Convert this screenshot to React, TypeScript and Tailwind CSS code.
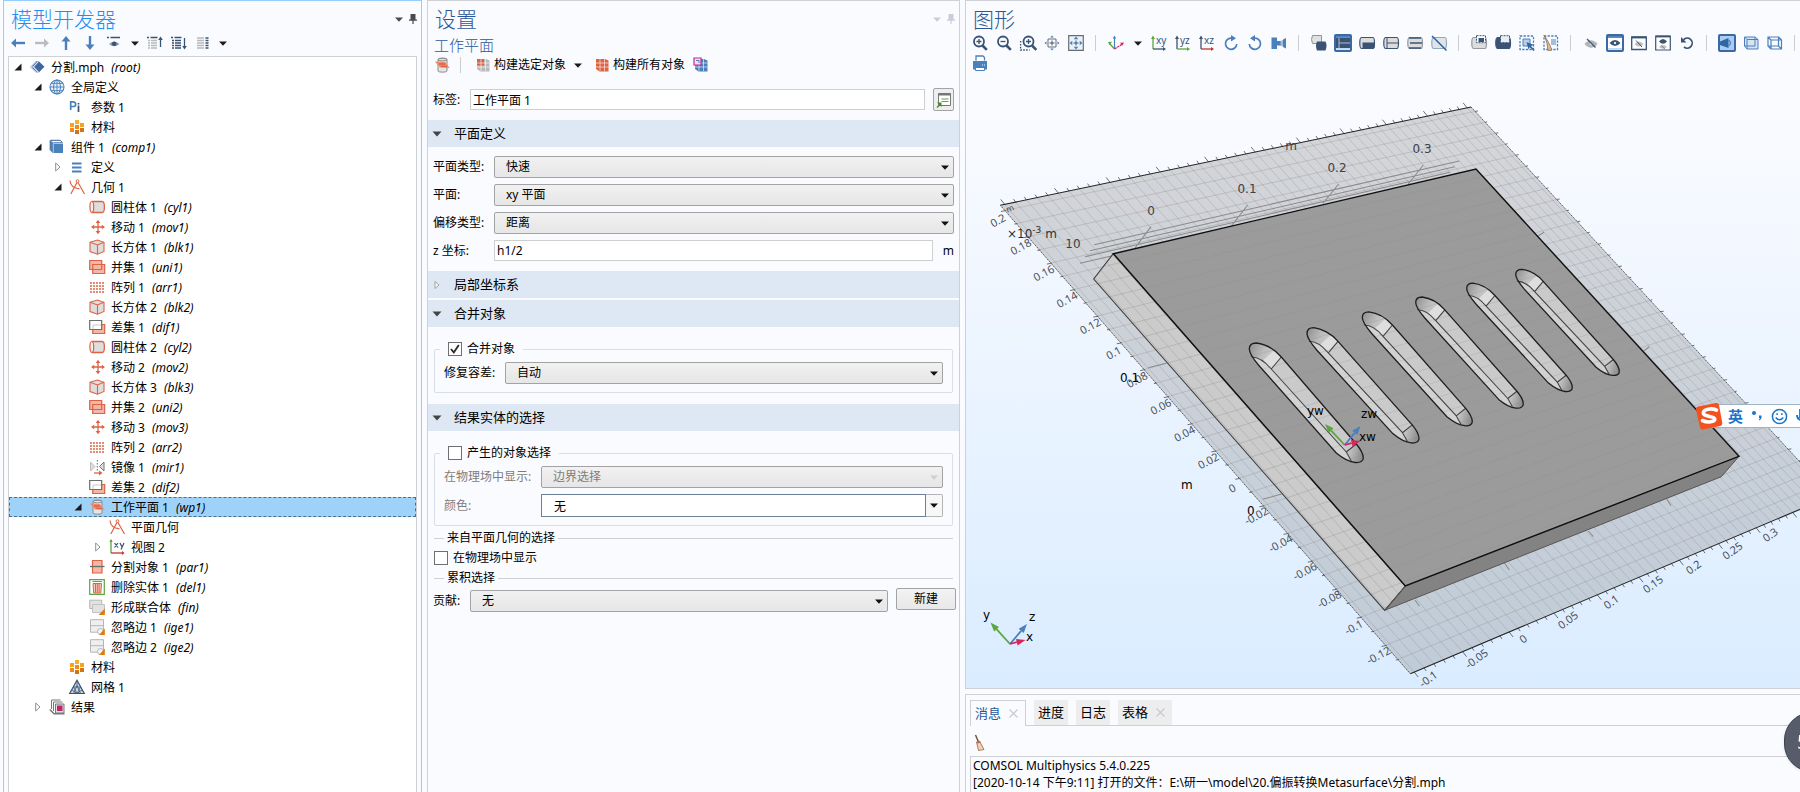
import React, { ReactNode } from "react";

const SANS = "font-['Noto_Sans','Noto_Sans_CJK_SC',sans-serif]";

/* ---------- small drawing helpers ---------- */

function Ic({ children }: { children: ReactNode }) {
  return (
    <svg viewBox="0 0 16 16" className="h-4 w-4 shrink-0 overflow-visible" fill="none" aria-hidden="true">
      {children}
    </svg>
  );
}

const O = "#dc6344";
const B = "#4a80bb";
const N = "#3a5374";
const G = "#5aa63f";
const R = "#c62f2f";

const Down = ({ color = "#1b1b1b" }: { color?: string }) => (
  <svg viewBox="0 0 8 5" className="h-[5px] w-2 shrink-0" aria-hidden="true">
    <path d="M0 0.5h8L4 4.8z" fill={color} />
  </svg>
);

const Pin = ({ color }: { color: string }) => (
  <svg viewBox="0 0 8 10" className="h-2.5 w-2 shrink-0" aria-hidden="true">
    <path d="M1.5 0h5v5.5H8v1.2H4.6V10H3.4V6.7H0V5.5h1.5z" fill={color} />
  </svg>
);

/* ---------- tree icons ---------- */

const icons: Record<string, ReactNode> = {
  root: (
    <Ic>
      <path d="M6.5 2.5 9.5 2l6 5.8-5.7 5.8-3-.4L1 8z" fill="#3f659d" />
      <path d="M6.8 2.6 1.2 8l5.6 5.2M9.6 13.5 4.4 8l5-5.6" stroke="#dce6f3" strokeWidth="1.1" />
      <path d="M1.2 8h3.4" stroke="#dce6f3" />
    </Ic>
  ),
  globe: (
    <Ic>
      <circle cx="8" cy="8" r="7" stroke={B} strokeWidth="1.1" fill="#eaf1f8" />
      <ellipse cx="8" cy="8" rx="3.4" ry="7" stroke={B} />
      <path d="M8 1v14M1 8h14M2.2 4.4h11.6M2.2 11.6h11.6" stroke={B} strokeWidth=".9" />
    </Ic>
  ),
  pi: (
    <Ic>
      <path d="M1.7 11V2.8h2.6a2.3 2.3 0 0 1 0 4.7H2" stroke={B} strokeWidth="1.7" />
      <path d="M9.5 6.5V13M9.5 4v1.4" stroke={N} strokeWidth="1.7" />
    </Ic>
  ),
  mat: (
    <Ic>
      <path d="M6 1h4v4H6z" fill="#fbb02a" />
      <path d="M1 4h4v4H1zM11 4h4v4h-4z" fill="#f9a01f" />
      <path d="M6 6h4v4H6zM1 9h4v4H1z" fill="#ee8a1c" />
      <path d="M11 9h4v4h-4zM6 11h4v4H6z" fill="#d2731a" />
    </Ic>
  ),
  comp: (
    <Ic>
      <path d="M4.5 4.5H14V14H4.5zM1.5 1.5 4 3.6v9.6L1.5 11z" fill={B} />
      <path d="M1.5 1.3h9.6l2.4 2.4H4.3M4 4v10M1.2 1.3v9.5l3 3" stroke="#2f5d94" />
      <path d="M4.2 14V4.2H14" stroke="#bfd5ea" strokeWidth=".9" />
    </Ic>
  ),
  def: (
    <Ic>
      <path d="M3 4.5h9.5M3 8.5h9.5M3 12.5h9.5" stroke={B} strokeWidth="2" />
    </Ic>
  ),
  geo: (
    <Ic>
      <circle cx="8.5" cy="2.2" r="1.4" stroke={O} />
      <path d="M9 3.5 15.5 15M8 3.5 1.8 15M1 1.5c.5 5 3.5 8 9.5 8.3" stroke={O} strokeWidth="1.2" />
    </Ic>
  ),
  cyl: (
    <Ic>
      <path d="M2.8 2.5h10.4c1.4 0 2.2 2 2.2 5.5s-.8 5.5-2.2 5.5H2.8z" fill="#dedede" />
      <path d="M2.8 2.5h10.4c1.4 0 2.2 2 2.2 5.5s-.8 5.5-2.2 5.5H2.8" stroke={O} strokeWidth="1.3" />
      <ellipse cx="2.8" cy="8" rx="1.9" ry="5.5" fill="#f2f2f2" stroke={O} strokeWidth="1.2" />
    </Ic>
  ),
  mov: (
    <Ic>
      <path d="M9 3v10M4 8h10" stroke={O} strokeWidth="1.3" />
      <path d="M9 .8 11.3 4H6.7zM9 15.2 6.7 12h4.6zM2 8l3.2-2.3v4.6zM16 8l-3.2 2.3V5.7z" fill={O} />
    </Ic>
  ),
  blk: (
    <Ic>
      <path d="M1 3.3 8.5 1 15 3.3v9.2L8.5 15.2 1 12.5z" fill="#dedede" stroke={O} strokeWidth="1.1" />
      <path d="M1 3.3 8.5 6 15 3.3M8.5 6v9.2" stroke={O} strokeWidth="1.1" />
    </Ic>
  ),
  uni: (
    <Ic>
      <path d="M.7 1.5h12v9h-12z" fill="#f2b7a6" />
      <path d="M3.7 5.5h12v9h-12z" fill="#f2b7a6" />
      <path d="M.7 1.5h12v9h-12zM3.7 5.5h12v9h-12z" stroke={O} strokeWidth="1.2" />
    </Ic>
  ),
  arr: (
    <Ic>
      <path d="M1 4h14M1 7h14M1 10h14M1 13h14" stroke={O} strokeWidth="1.6" strokeDasharray="2 1" />
    </Ic>
  ),
  dif: (
    <Ic>
      <path d="M3.7 5.5h12v9h-12z" fill="#f2b7a6" stroke={O} strokeWidth="1.2" />
      <path d="M.7 1.5h12v9h-12z" fill="#fff" stroke="#6d6d6d" strokeWidth="1.2" />
      <path d="M4 10V6h8" stroke="#c9c9c9" />
    </Ic>
  ),
  mir: (
    <Ic>
      <path d="M1.5 3v9L6 7.5z" fill="#dedede" stroke="#bdbdbd" />
      <path d="M15 3v9l-4.5-4.5z" fill="#dedede" stroke="#777" />
      <path d="M8.3 1v11" stroke="#666" strokeDasharray="1.5 1.5" />
      <path d="M5 14h6" stroke={O} strokeWidth="1.3" />
      <path d="m10 11.5 3.5 2.5-3.5 2.5z" fill={O} />
    </Ic>
  ),
  wp: (
    <Ic>
      <path d="M4 2.5V14c0 1.5 9 1.5 9 0V2.5c0-1.5-9-1.5-9 0Z" fill="#e4e4e4" stroke="#8a8a8a" />
      <ellipse cx="8.5" cy="2.5" rx="4.5" ry="1.4" stroke="#8a8a8a" />
      <path d="M.8 4.5 11 5l4.7 6L6 10.5z" fill="#f08a70" />
      <path d="M5 7h6M7 9.3h6" stroke={O} strokeWidth="1.3" />
    </Ic>
  ),
  view: (
    <Ic>
      <path d="M2 1v13" stroke={G} strokeWidth="1.3" />
      <path d="M2 14h12" stroke={R} strokeWidth="1.3" />
      <path d="m13 12 2.5 2-2.5 2z" fill={R} />
      <path d="m.3 3 1.7-3 1.700 3z" fill={G} />
      <path d="m5.500 4 3.500 4.500M9 4 5.500 8.500M11 4l2 4M15 4l-3 6.500" stroke={N} strokeWidth="1.2" />
    </Ic>
  ),
  par: (
    <Ic>
      <path d="M3.5 1.5H13V14H3.5z" fill="#f2b7a6" stroke={O} strokeWidth="1.2" />
      <path d="M1 7.5h14.5" stroke="#6d6d6d" strokeWidth="1.3" />
    </Ic>
  ),
  del: (
    <Ic>
      <path d="M.7.7h14.6v14.6H.7z" stroke={G} strokeWidth="1.2" fill="#fff" />
      <path d="M3.500 2.5H13M4 4.5h8.500l-.7 9.500H4.7z" stroke={O} fill="#f6cdc1" />
      <path d="M6.5 4.5v9M8.3 4.5v9M10.1 4.5v9" stroke={O} />
    </Ic>
  ),
  fin: (
    <Ic>
      <path d="M.7 1.2h12v8.3h-12z" fill="#e2e2e2" stroke="#b5b5b5" />
      <path d="M3.5 5.5h12v8h-12z" fill="#e2e2e2" stroke="#c2c2c2" />
      <path d="M15.8 9.5V16H9.5z" fill="#e0790f" />
    </Ic>
  ),
  ige: (
    <Ic>
      <path d="M1.5.7h13v12.5h-13z" fill="#efefef" stroke="#b5b5b5" />
      <path d="M1.5 6.7h13" stroke="#b5b5b5" />
      <circle cx="11.5" cy="12.5" r="3" fill="#f4f4f4" stroke="#b5b5b5" />
      <path d="M15.8 9.5V16H10z" fill="#e0790f" />
    </Ic>
  ),
  mesh: (
    <Ic>
      <path d="M8 1.2 15.3 14.5H.7z" fill="#cfd8df" stroke={N} strokeWidth="1.2" />
      <path d="M8 1.5v5l-3.5 8M8 6.5l3.5 8M4.5 8h7M3 11l5 3.5 5-3.5M4.5 8l3.5 6.5L11.5 8" stroke={N} strokeWidth=".8" />
    </Ic>
  ),
  res: (
    <Ic>
      <path d="M2.5 10V1h9M4.500 12V3h9" stroke="#777" />
      <path d="M6.5 5H15v9H6.5z" fill="#dedede" stroke="#777" />
      <path d="M8 6.5h5.5V12H8z" fill="#c1246e" />
      <path d="M.8 10.5 5 14.8h10.5" stroke="#777" strokeWidth="1.5" />
    </Ic>
  ),
};

type Node = { l: number; i: string; t: string; tag?: string; a?: "open" | "shut"; sel?: boolean };

const tree: Node[] = [
  { l: 0, i: "root", t: "分割.mph", tag: "(root)", a: "open" },
  { l: 1, i: "globe", t: "全局定义", a: "open" },
  { l: 2, i: "pi", t: "参数 1" },
  { l: 2, i: "mat", t: "材料" },
  { l: 1, i: "comp", t: "组件 1", tag: "(comp1)", a: "open" },
  { l: 2, i: "def", t: "定义", a: "shut" },
  { l: 2, i: "geo", t: "几何 1", a: "open" },
  { l: 3, i: "cyl", t: "圆柱体 1", tag: "(cyl1)" },
  { l: 3, i: "mov", t: "移动 1", tag: "(mov1)" },
  { l: 3, i: "blk", t: "长方体 1", tag: "(blk1)" },
  { l: 3, i: "uni", t: "并集 1", tag: "(uni1)" },
  { l: 3, i: "arr", t: "阵列 1", tag: "(arr1)" },
  { l: 3, i: "blk", t: "长方体 2", tag: "(blk2)" },
  { l: 3, i: "dif", t: "差集 1", tag: "(dif1)" },
  { l: 3, i: "cyl", t: "圆柱体 2", tag: "(cyl2)" },
  { l: 3, i: "mov", t: "移动 2", tag: "(mov2)" },
  { l: 3, i: "blk", t: "长方体 3", tag: "(blk3)" },
  { l: 3, i: "uni", t: "并集 2", tag: "(uni2)" },
  { l: 3, i: "mov", t: "移动 3", tag: "(mov3)" },
  { l: 3, i: "arr", t: "阵列 2", tag: "(arr2)" },
  { l: 3, i: "mir", t: "镜像 1", tag: "(mir1)" },
  { l: 3, i: "dif", t: "差集 2", tag: "(dif2)" },
  { l: 3, i: "wp", t: "工作平面 1", tag: "(wp1)", a: "open", sel: true },
  { l: 4, i: "geo", t: "平面几何" },
  { l: 4, i: "view", t: "视图 2", a: "shut" },
  { l: 3, i: "par", t: "分割对象 1", tag: "(par1)" },
  { l: 3, i: "del", t: "删除实体 1", tag: "(del1)" },
  { l: 3, i: "fin", t: "形成联合体", tag: "(fin)" },
  { l: 3, i: "ige", t: "忽略边 1", tag: "(ige1)" },
  { l: 3, i: "ige", t: "忽略边 2", tag: "(ige2)" },
  { l: 2, i: "mat", t: "材料" },
  { l: 2, i: "mesh", t: "网格 1" },
  { l: 1, i: "res", t: "结果", a: "shut" },
];

const indent = ["pl-0", "pl-5", "pl-10", "pl-15", "pl-20"];

function TreeRow({ n }: { n: Node }) {
  return (
    <li
      role="treeitem"
      aria-selected={!!n.sel}
      className={`flex h-5 items-center ${indent[n.l]} ${n.sel ? "bg-[#9fd2f9] outline-1 -outline-offset-1 outline-dashed outline-[#4c708c]" : ""}`}
    >
      <span className="flex w-[18px] justify-center">
        {n.a && (
          <button aria-label={n.a === "open" ? "折叠" : "展开"} className="flex">
            <svg viewBox="0 0 8 10" className="h-2.5 w-2">
              {n.a === "open" ? (
                <path d="M7.5 1.5v7h-7z" fill="#1b1b1b" />
              ) : (
                <path d="M1.7 1v8L6 5z" fill="#fff" stroke="#909090" />
              )}
            </svg>
          </button>
        )}
      </span>
      <span className="ml-0.5">{icons[n.i]}</span>
      <span className="ml-1.5 pt-0.5 whitespace-nowrap">{n.t}</span>
      {n.tag && <span className="ml-[7px] pt-0.5 italic">{n.tag}</span>}
    </li>
  );
}

/* ---------- toolbars ---------- */

function Tool({ label, children, on }: { label: string; children: ReactNode; on?: boolean }) {
  return (
    <button aria-label={label} className="flex h-5 w-6 shrink-0 items-center justify-center">
      {on ? (
        <span className="flex h-[18px] w-[18px] items-center justify-center rounded-xs border-2 border-[#3c69a5] bg-linear-to-b from-[#4f80b8] to-[#cfe4fa]">
          {children}
        </span>
      ) : (
        <Ic>{children}</Ic>
      )}
    </button>
  );
}

const Sep = () => (
  <span className="flex h-5 w-4 shrink-0 items-center pl-[7px]">
    <span className="h-4 w-px bg-[#cdcdd0]" />
  </span>
);

function ModelBar() {
  return (
    <div className="-ml-0.5 flex h-5 items-center">
      <Tool label="后退"><path d="M3 8h12" stroke={B} strokeWidth="2.4" /><path d="M1 8l5-4.5v9z" fill={B} /></Tool>
      <Tool label="前进"><path d="M1 8h12" stroke="#bcbcbc" strokeWidth="2.4" /><path d="M15 8l-5-4.5v9z" fill="#bcbcbc" /></Tool>
      <Tool label="上移"><path d="M8 4v11" stroke={B} strokeWidth="2.4" /><path d="M8 1l4.5 5.5h-9z" fill={B} /></Tool>
      <Tool label="下移"><path d="M8 1v11" stroke={B} strokeWidth="2.4" /><path d="M8 15 3.5 9.5h9z" fill={B} /></Tool>
      <Tool label="显示">
        <path d="M1 2.5h2M4.5 2.5H14" stroke={N} strokeWidth="1.6" />
        <path d="M3 9q5-4.5 10.5 0-5.5 4.5-10.500 0z" fill="#7f99b6" />
        <circle cx="8.2" cy="8.8" r="2.2" fill={N} />
      </Tool>
      <button aria-label="显示选项" className="flex w-[17px] justify-center"><Down /></button>
      <Tool label="全部折叠">
        <path d="M0 2.5h2M3.5 2.5h7" stroke={N} strokeWidth="1.4" />
        <path d="M1 5.5h2M4 5.5h6M1 8h2M4 8h6M1 10.5h2M4 10.5h6M1 13h2M4 13h6" stroke="#b9b9b9" strokeWidth="1.3" />
        <path d="M13.5 12V4" stroke={N} strokeWidth="1.3" /><path d="m13.5 1.500 2.3 3.500h-4.6z" fill={N} />
      </Tool>
      <Tool label="全部展开">
        <path d="M0 2.5h2M3.5 2.5h7M1 5.5h2M4 5.5h6M1 8h2M4 8h6M1 10.5h2M4 10.5h6M1 13h2M4 13h6" stroke={N} strokeWidth="1.3" />
        <path d="M13.5 3v9" stroke={N} strokeWidth="1.3" /><path d="m13.5 14.500 2.3-3.500h-4.6z" fill={N} />
      </Tool>
      <Tool label="列">
        <path d="M2 3h7M2 5.5h7M2 8h7M2 10.5h7M2 13h7" stroke="#b9b9b9" strokeWidth="1.3" />
        <path d="M10.5 3h3M10.5 5.5h3M10.5 8h3M10.5 10.5h3M10.5 13h3" stroke={N} strokeWidth="1.5" />
      </Tool>
      <button aria-label="列选项" className="flex w-[15px] justify-center"><Down /></button>
    </div>
  );
}

const Lens = ({ minus }: { minus?: boolean }) => (
  <>
    <circle cx="7" cy="6.5" r="5" stroke={N} strokeWidth="1.8" />
    <path d="m10.5 10.5 4.300 4.300" stroke={N} strokeWidth="2.6" />
    <path d={minus ? "M4.500 6.500h5" : "M4.500 6.500h5M7 4v5"} stroke={N} strokeWidth="1.3" />
  </>
);

const Axes = ({ v, h, t }: { v: string; h: string; t: string }) => (
  <>
    <path d="M2 2.5V14" stroke={v} strokeWidth="1.3" />
    <path d="m0 4 2-3.5L4 4z" fill={v} />
    <path d="M2 14h11" stroke={h} strokeWidth="1.3" />
    <path d="m12 12 3 2-3 2z" fill={h} />
    <text x="5" y="9" fontSize="10" fill={N} className="font-['Noto_Sans']">{t}</text>
  </>
);

const Rot = () => (
  <>
    <path d="M9.5 3.3A5.6 5.6 0 1 0 13.7 9" stroke={B} strokeWidth="1.7" />
    <path d="m8 0 5 3.300L8 6.500z" fill={B} />
  </>
);

const Can = ({ fill, stroke }: { fill: string; stroke: string }) => (
  <path d="M2.500 2.500H14c2 0 2 11 0 11H2.500c-2.300 0-2.300-11 0-11z" fill={fill} stroke={stroke} strokeWidth="1.2" />
);

const Eye = ({ y = 8, c = N }: { y?: number; c?: string }) => (
  <>
    <path d={`M1.500 ${y}q6.500-7.500 13 0-6.500 7.500-13 0z`} fill={c} />
    <circle cx="8" cy={y} r="1.2" fill="#dfe9f5" />
  </>
);

function GraphBar() {
  return (
    <>
      <div className="flex h-5 items-center overflow-hidden pl-0.5">
        <Tool label="放大"><Lens /></Tool>
        <Tool label="缩小"><Lens minus /></Tool>
        <Tool label="框选缩放">
          <path d="M.6 6v9h9" stroke={N} strokeDasharray="1.6 1.3" strokeWidth="1.3" />
          <g transform="translate(1.5 0)"><Lens /></g>
        </Tool>
        <Tool label="缩放到选择">
          <path d="M4 4h8v8H4z" stroke="#6d6d6d" />
          <path d="M5.5 8h5M8 5.5v5" stroke={N} />
          <path d="m8 .5 1.800 2H6.200zM8 15.500l1.800-2H6.200zM.5 8l2-1.800v3.600zM15.500 8l-2-1.800v3.600z" fill={B} />
        </Tool>
        <Tool label="缩放到范围">
          <path d="M.7.7h14.6v14.6H.7z" stroke="#6d6d6d" strokeWidth="1.2" fill="#e9f1fa" />
          <path d="M5.5 8h5M8 5.5v5" stroke={N} />
          <path d="m8 1.500 2.300 2.800H5.700zM8 14.500l2.300-2.800H5.700zM1.500 8l2.800-2.300v4.600zM14.500 8l-2.800-2.300v4.600z" fill={B} />
        </Tool>
        <Sep />
        <Tool label="默认视图">
          <path d="M6.5 14V3" stroke={B} strokeWidth="1.2" />
          <path d="M6.5 14 2 9" stroke={G} strokeWidth="1.3" />
          <path d="m6.5 14 8-5" stroke="#d8255f" strokeWidth="1.3" strokeDasharray="2.5 .7" />
          <path d="m6.500.5 1.700 3H4.800z" fill={B} /><path d="m0 7 4-.3-2.500 3.600z" fill={G} /><path d="m16 7.500-1.700 3.300-2.200-3z" fill="#d8255f" />
        </Tool>
        <button aria-label="视图选项" className="flex w-[19px] shrink-0 justify-center"><Down /></button>
        <Tool label="xy 视图"><Axes v={G} h={N} t="xy" /></Tool>
        <Tool label="yz 视图"><Axes v={N} h={G} t="yz" /></Tool>
        <Tool label="xz 视图"><Axes v={N} h={R} t="xz" /></Tool>
        <Tool label="顺时针旋转"><Rot /></Tool>
        <Tool label="逆时针旋转"><g transform="matrix(-1 0 0 1 16 0)"><Rot /></g></Tool>
        <Tool label="照相机">
          <path d="M.5 2.500h5.500v11.500H.500zM6 6h4v4.500H6z" fill={B} />
          <path d="M9.500 6 12 5v6.500l-2.500-1z" fill="#9dbbdc" />
          <path d="M12 4.500 15 3v10.500l-3-1.500z" fill={B} />
        </Tool>
        <Sep />
        <Tool label="透明度">
          <path d="M1.500.500h9v8h-9q-2-4 0-8z" fill="#e1e1e1" stroke="#8d949c" />
          <path d="M6 6.500h8.500q2 4.300 0 9H6q-2-4.500 0-9z" fill={N} />
        </Tool>
        <Tool label="场景光" on>
          <svg viewBox="0 0 14 14" className="h-3.5 w-3.5">
            <path d="M0 2h14v10H0z" fill={N} /><path d="M3 2v10M3 7h11" stroke="#aebfd1" />
          </svg>
        </Tool>
        <Tool label="实体">
          <Can fill="#dcdcdc" stroke={N} /><path d="M3.500 7.500h12v5.500h-12z" fill={N} />
        </Tool>
        <Tool label="线框"><Can fill="#dcdcdc" stroke={N} /><path d="M4 2.500v11M4 8h11" stroke={N} /></Tool>
        <Tool label="轮廓"><Can fill="#dcdcdc" stroke="#8d99a6" /><path d="M2 3h12M2 13h12M3 8h12" stroke={N} strokeWidth="1.3" /></Tool>
        <Tool label="隐藏网格"><Can fill="#e0e3e8" stroke="#92a7c1" /><path d="m1 1 14.500 14.500" stroke="#235f9e" strokeWidth="1.4" /></Tool>
        <Sep />
        <Tool label="选择实体"><Can fill="#dcdcdc" stroke="#9299a1" /><path d="M5.5.7h9v7h-9z" fill="#fff" stroke={N} strokeDasharray="2 1" /><path d="M7.500 3H13v4H7.500z" fill={N} /></Tool>
        <Tool label="选择边界"><Can fill={N} stroke={N} /><path d="M5.5.7h9v7h-9z" fill="#e9eef4" stroke={N} strokeDasharray="2 1" /></Tool>
        <Tool label="框选">
          <path d="M1 1h13.500v13.500H1z" stroke={B} strokeWidth="1.3" strokeDasharray="2.3 1.3" />
          <path d="M4 4h7v7H4z" fill="#b8d0ea" stroke={B} /><path d="m7.500 7 7.500 3-3 1 3.500 4-1 1-3.800-3.800-1.200 2.300z" fill="#2f67a3" />
        </Tool>
        <Tool label="清除选择">
          <path d="M1 1h13.500v13.500H1z" stroke={B} strokeWidth="1.3" strokeDasharray="2.3 1.3" />
          <path d="M8 4h5v6H8z" fill="#9fbfe2" /><path d="m1.500.5 4 7 3.500 7.500-4 .5-1-7z" fill="#e2bd95" stroke="#8c6b4d" strokeWidth=".8" />
        </Tool>
        <Sep />
        <Tool label="隐藏"><Eye y={9} c="#b5b5b5" /><path d="m4 4 8.500 8.500" stroke={N} strokeWidth="1.3" /></Tool>
        <Tool label="视图可见性" on>
          <svg viewBox="0 0 14 14" className="h-3.5 w-3.5">
            <path d="M0 2h14v10H0z" fill="#fff" /><path d="M1.500 7q5.500-6 11 0-5.500 6-11 0z" fill={N} />
            <circle cx="7" cy="7" r="1.200" fill="#dfe9f5" />
          </svg>
        </Tool>
        <Tool label="隐藏所选">
          <path d="M.7 2h14.600v12.500H.7z" fill="#fff" stroke={N} strokeWidth="1.3" /><path d="M1 2.500h14" stroke={N} strokeWidth="1.8" />
          <path d="M3.500 9q4.500-5 9 0-4.500 5-9 0z" fill="#c0c0c0" /><path d="m5 5.500 6 6.500" stroke={N} />
        </Tool>
        <Tool label="反向隐藏">
          <path d="M.7 1h14.600v14H.7z" fill="#fff" stroke={N} strokeWidth="1.2" /><path d="M1 1.500h14" stroke={N} strokeWidth="1.8" />
          <path d="M4 6.500q4-5 8 0-4 4.500-8 0z" fill={N} /><path d="M4 12q4-4 8 0-4 3.500-8 0z" fill="#c0c0c0" /><path d="m6 10.500 4 3.500" stroke="#777" strokeWidth=".8" />
        </Tool>
        <Tool label="重置隐藏"><path d="M4.500 4.800A5 5 0 1 1 5 12" stroke={N} strokeWidth="1.7" /><path d="M2 2v5.500h5.500z" fill={N} /></Tool>
        <Sep />
        <Tool label="正交投影" on>
          <svg viewBox="0 0 14 14" className="h-3.5 w-3.5">
            <path d="M0 0h14v14H0z" fill="#a9ccf0" /><path d="M0 5.500 8.500 2v10L0 9z" fill="#2f67a3" /><path d="M8.500 4q4 3 0 6" stroke={B} strokeWidth="1.3" fill="none" />
          </svg>
        </Tool>
        <Tool label="剪裁"><path d="M1.500 2h10.500v9H1.500zM4 4.500h11v9.500H4z" fill="#d6e4f3" stroke={B} /><path d="M1.500 2 4 4.500M12 2l3 2.500M1.500 11 4 14" stroke={B} /></Tool>
        <Tool label="线框盒"><path d="M1 2h10.500v9H1zM4 5h10.500v9H4zM1 2l3 3M11.500 2l3 3M1 11l3 3M11.500 11l3 3" stroke={B} strokeWidth="1.2" /></Tool>
        <Sep />
      </div>
      <div className="flex h-5 items-center pl-0.5">
        <Tool label="打印">
          <path d="M4 5.500V1h7l1.500 1.500v3" fill="#fff" stroke={B} strokeWidth="1.3" />
          <path d="M1 6h14v8.500H1z" fill={B} /><path d="M3.500 12.500h9v3h-9z" fill="#fff" stroke={B} /><path d="M10 10h1M12 10h1" stroke="#fff" />
        </Tool>
      </div>
    </>
  );
}

/* ---------- settings ---------- */

function Title({ text, color, ctl }: { text: string; color: string; ctl?: string }) {
  return (
    <div className="flex h-8 items-center justify-between pt-1 pl-[7px]">
      <h2 className={`text-[21px] leading-7 font-light ${color}`}>{text}</h2>
      {ctl && (
        <div className="flex items-center gap-1.5 pr-1">
          <button aria-label="窗口菜单" className="flex"><Down color={ctl} /></button>
          <button aria-label="固定" className="flex"><Pin color={ctl} /></button>
        </div>
      )}
    </div>
  );
}

function Section({ text, shut }: { text: string; shut?: boolean }) {
  return (
    <h3 className="h-[27px] bg-[#dee8f4]">
      <button className="flex h-full w-full items-center pl-1 text-[13px]" aria-expanded={!shut}>
        <svg viewBox="0 0 10 10" className="mr-3 h-2.5 w-2.5" aria-hidden="true">
          {shut ? <path d="M3 1.500v7L7 5z" fill="#fff" stroke="#a0a0a0" /> : <path d="M.5 2.500h9L5 7.500z" fill="#444" />}
        </svg>
        {text}
      </button>
    </h3>
  );
}

function Select({ id, value, disabled }: { id: string; value: string; disabled?: boolean }) {
  return (
    <span className="relative flex h-[22px] min-w-0 flex-1">
      <select
        id={id}
        disabled={disabled}
        className={`h-full w-full appearance-none rounded-xs border border-[#a3a3a3] bg-linear-to-b from-[#f1f1f1] to-[#e6e6e6] pl-[11px] text-xs ${disabled ? "text-[#7d7d7d] opacity-100" : "text-black"}`}
      >
        <option>{value}</option>
      </select>
      <span className="pointer-events-none absolute inset-y-0 right-[5px] flex items-center">
        <Down color={disabled ? "#cfcfcf" : "#111"} />
      </span>
    </span>
  );
}

function Field({ id, label, w, dim, children }: { id: string; label: string; w: string; dim?: boolean; children: ReactNode }) {
  return (
    <div className="flex items-center">
      <label htmlFor={id} className={`${w} shrink-0 ${dim ? "text-[#7d7d7d]" : ""}`}>{label}</label>
      {children}
    </div>
  );
}

function Check({ label, checked }: { label: string; checked?: boolean }) {
  return (
    <label className="flex h-5 items-center gap-[5px]">
      <span className="relative flex">
        <input type="checkbox" defaultChecked={checked} className="peer h-3.5 w-3.5 appearance-none border border-[#6f6f6f] bg-white" />
        <svg viewBox="0 0 14 14" className="pointer-events-none absolute inset-0 hidden h-3.5 w-3.5 peer-checked:block">
          <path d="m3 7 2.800 3.500 5-7.500" stroke="#2a2a2a" strokeWidth="1.9" fill="none" />
        </svg>
      </span>
      {label}
    </label>
  );
}

const Divider = ({ text }: { text: string }) => (
  <div className="flex h-5 items-center gap-[3px]">
    <span className="h-px w-2.5 bg-[#cfd0d4]" />
    <span>{text}</span>
    <span className="h-px flex-1 bg-[#cfd0d4]" />
  </div>
);

const Grid3 = ({ sel, c }: { sel: string; c: string }) => (
  <>
    <path d="M2 2h9l3.500 1.500v11H5.500L2 12z" fill={c} />
    <path d="M2 2h7v6.500H2z" fill={sel} />
    <path d="M6 2v12M10.500 2v12M2 6h12.500M2 10h12.500" stroke="#fff" strokeWidth=".6" />
  </>
);

function Settings() {
  return (
    <section className="flex w-[533px] shrink-0 flex-col border border-b-0 border-[#cfd0d4]">
      <Title text="设置" color="text-[#2b5797]" ctl="#c9cdd8" />
      <p className="h-6 pl-1.5 text-[15px] leading-6 font-light text-[#2b5797]">工作平面</p>
      <div className="flex h-4 items-center pl-1.5">
        <button aria-label="工作平面" className="flex">{icons.wp}</button>
        <span className="ml-2.5 h-4 w-px bg-[#cdcdd0]" />
        <button className="ml-3.5 flex items-center gap-[3px] whitespace-nowrap">
          <Ic><Grid3 sel={O} c="#b9b9b9" /></Ic>构建选定对象
        </button>
        <button aria-label="构建选项" className="ml-2 flex"><Down /></button>
        <button className="ml-3 flex items-center gap-[3px] whitespace-nowrap">
          <Ic><Grid3 sel={O} c={O} /></Ic>构建所有对象
        </button>
        <button aria-label="构建网格" className="ml-2 flex">
          <Ic>
            <Grid3 sel={B} c={B} />
            <path d="M1 1h7v7H1z" fill="#f4dff0" stroke="#c12a9a" strokeWidth="1.2" />
            <path d="M3 3.500h3V6" stroke={B} />
          </Ic>
        </button>
      </div>

      <div className="mt-[15px] flex h-[23px] items-center pr-[5px] pl-[5px]">
        <label htmlFor="lbl" className="w-[37px] shrink-0">标签:</label>
        <input id="lbl" defaultValue="工作平面 1" className="h-[21px] min-w-0 flex-1 border border-[#cfcfcf] bg-white pl-0.5 text-xs" />
        <button aria-label="创建选择" className="ml-2 flex h-[23px] w-[21px] items-center justify-center rounded-xs border border-[#a3a3a3] bg-[#eeeeee]">
          <Ic>
            <path d="M2.500 1.500h12v12h-12z" fill="#fff" stroke="#777" /><path d="M2.500 2.500h12" stroke="#777" strokeWidth="2" />
            <path d="M5.500 7h7M5.500 9.500h7" stroke={G} /><path d="M1 10.500h4.500V15L4 13.500 1.500 16 .5 15 3 12.500z" fill="#3f8f2b" />
          </Ic>
        </button>
      </div>

      <div className="mt-[9px]"><Section text="平面定义" /></div>
      <div className="mt-[9px] flex flex-col gap-1.5 px-[5px]">
        <Field id="pt" label="平面类型:" w="w-[61px]"><Select id="pt" value="快速" /></Field>
        <Field id="pl" label="平面:" w="w-[61px]"><Select id="pl" value="xy 平面" /></Field>
        <Field id="ot" label="偏移类型:" w="w-[61px]"><Select id="ot" value="距离" /></Field>
        <Field id="zc" label="z 坐标:" w="w-[61px]">
          <input id="zc" defaultValue="h1/2" className="h-[21px] min-w-0 flex-1 border border-[#cfcfcf] bg-white pl-0.5 text-xs" />
          <span className="w-[21px] text-right">m</span>
        </Field>
      </div>

      <div className="mt-2.5 flex flex-col gap-0.5">
        <Section text="局部坐标系" shut />
        <Section text="合并对象" />
      </div>
      <fieldset className="mx-1.5 mt-3 rounded-xs border border-[#dadee6] px-[9px] pb-2">
        <legend className="-ml-1 px-2"><Check label="合并对象" checked /></legend>
        <div className="pt-[3px]">
          <Field id="rt" label="修复容差:" w="w-[61px]"><Select id="rt" value="自动" /></Field>
        </div>
      </fieldset>

      <div className="mt-[11px]"><Section text="结果实体的选择" /></div>
      <fieldset className="mx-1.5 mt-3 rounded-xs border border-[#dadee6] px-[9px] pb-2">
        <legend className="-ml-1 px-2"><Check label="产生的对象选择" /></legend>
        <div className="flex flex-col gap-1.5 pt-[3px]">
          <Field id="sp" label="在物理场中显示:" w="w-[97px]" dim><Select id="sp" value="边界选择" disabled /></Field>
          <Field id="co" label="颜色:" w="w-[97px]" dim>
            <input id="co" defaultValue="无" className="h-[23px] min-w-0 flex-1 border border-[#6d8096] bg-white pl-3 text-xs" />
            <button aria-label="选择颜色" className="flex h-[23px] w-[17px] items-center justify-center rounded-r-xs border border-l-0 border-[#b4b4b4] bg-[#f7f7f7]">
              <Down color="#111" />
            </button>
          </Field>
        </div>
      </fieldset>
      <div className="mt-0.5 flex flex-col px-1.5">
        <Divider text="来自平面几何的选择" />
        <Check label="在物理场中显示" />
        <Divider text="累积选择" />
      </div>
      <div className="flex h-6 items-end gap-2 pr-[3px] pl-[5px]">
        <div className="flex flex-1 items-center">
          <label htmlFor="cs" className="w-[37px] shrink-0">贡献:</label>
          <Select id="cs" value="无" />
        </div>
        <button className="h-[22px] w-[60px] self-start rounded-xs border border-[#a3a3a3] bg-linear-to-b from-[#f3f3f3] to-[#e8e8e8]">新建</button>
      </div>
    </section>
  );
}

/* ---------- 3D scene ---------- */

type P = [number, number];
// Floor corners: back-left, back-right, front-right, front-left
const QA: P = [1000.3, 205.3];
const QB: P = [1471, 107];
const QC: P = [1831.5, 496];
const QD: P = [1410.3, 673.7];
const X0 = -0.104, X1 = 0.405, Y0 = 0.204, Y1 = -0.14;

function project(x: number, y: number): P {
  const u = (x - X0) / (X1 - X0);
  const v = (y - Y0) / (Y1 - Y0);
  const d1: P = [QB[0] - QC[0], QB[1] - QC[1]];
  const d2: P = [QD[0] - QC[0], QD[1] - QC[1]];
  const s: P = [QA[0] - QB[0] + QC[0] - QD[0], QA[1] - QB[1] + QC[1] - QD[1]];
  const det = d1[0] * d2[1] - d2[0] * d1[1];
  const g = (s[0] * d2[1] - d2[0] * s[1]) / det;
  const h = (d1[0] * s[1] - s[0] * d1[1]) / det;
  const w = g * u + h * v + 1;
  const f = (k: 0 | 1) =>
    ((QB[k] - QA[k] + g * QB[k]) * u + (QD[k] - QA[k] + h * QD[k]) * v + QA[k]) / w;
  return [f(0), f(1)];
}

const seg = (a: P, b: P) => `M${a[0].toFixed(1)} ${a[1].toFixed(1)}L${b[0].toFixed(1)} ${b[1].toFixed(1)}`;
const off = (a: P, dx: number, dy: number): P => [a[0] + dx, a[1] + dy];

let gridX = "";
let gridY = "";
let ticks = "";
for (let i = -10; i <= 40; i++) {
  const x = i / 100;
  const big = i % 5 === 0;
  const t = project(x, Y0);
  const b = project(x, Y1);
  gridX += seg(t, b);
  ticks += seg(t, off(t, big ? -4 : -2, big ? -5 : -3)) + seg(b, off(b, big ? 4 : 2, big ? 5 : 3));
}
for (let i = -13; i <= 20; i++) {
  const y = i / 100;
  const big = i % 2 === 0;
  const l = project(X0, y);
  const r = project(X1, y);
  gridY += seg(l, r);
  ticks += seg(off(l, big ? -4 : -2, big ? 1 : 0.5), off(l, 1, 0)) + seg(r, off(r, big ? 3 : 2, -0.5));
}
const gridPath = gridX + gridY;

const slots: { l: P; r: P; s: number }[] = [
  { l: [1249.3, 349], r: [1363.3, 458], s: 1 },
  { l: [1307, 333.5], r: [1419, 438.5], s: 0.97 },
  { l: [1362.3, 317.5], r: [1472.3, 421.5], s: 0.94 },
  { l: [1415.7, 302.5], r: [1523.3, 404], s: 0.91 },
  { l: [1466.7, 288.5], r: [1572.3, 387.5], s: 0.88 },
  { l: [1515.7, 274.5], r: [1619.3, 371.5], s: 0.86 },
];

function slotPaths({ l, r, s }: { l: P; r: P; s: number }) {
  const a = (x: number, y: number) => `${(l[0] + x * s).toFixed(1)} ${(l[1] + y * s).toFixed(1)}`;
  const b = (x: number, y: number) => `${(r[0] + x * s).toFixed(1)} ${(r[1] + y * s).toFixed(1)}`;
  return {
    outline: `M${a(0, 0)}C${a(0, -4)} ${a(2, -6)} ${a(7, -6)}C${a(15, -5)} ${a(25, 0)} ${a(32, 8)}L${b(-7, -14)}C${b(-2, -8)} ${b(0, -4)} ${b(0, 0)}C${b(0, 3)} ${b(-3, 5)} ${b(-8, 4.5)}C${b(-14, 4)} ${b(-21, 0)} ${b(-27, -5)}L${a(10, 17)}C${a(4, 10)} ${a(0, 4)} ${a(0, 0)}Z`,
    top: `M${a(0, 0)}C${a(0, -4)} ${a(2, -6)} ${a(7, -6)}C${a(15, -5)} ${a(25, 0)} ${a(32, 8)}L${a(22, 20)}Q${a(12, 8)} ${a(2, 8)}Z`,
    hi: `M${a(24, 2)}L${a(32, 8)}L${a(22, 20)}L${a(14, 11)}Z`,
    wall: `M${a(2, 8)}Q${a(12, 8)} ${a(22, 20)}L${b(-17, -6)}L${b(-12, 3)}L${b(-27, -5)}L${a(10, 17)}Z`,
    end: `M${b(-17, -6)}L${b(-7, -14)}C${b(-2, -8)} ${b(0, -4)} ${b(0, 0)}C${b(0, 3)} ${b(-3, 5)} ${b(-12, 4)}Z`,
    lines: `M${a(2, 8)}Q${a(12, 8)} ${a(22, 20)}L${b(-17, -6)}M${a(22, 20)}L${a(32, 8)}M${b(-7, -14)}L${b(-17, -6)}L${b(-12, 3)}`,
  };
}

const TOP = "1113.3,253.7 1476,169 1739,456.3 1405.3,586";
const LEFT = "1113.3,253.7 1405.3,586 1384.7,610.3 1093.7,279";
const FRONT = "1405.3,586 1739,456.3 1721.3,476.7 1384.7,610.3";

const yLabels = ["0.2", "0.18", "0.16", "0.14", "0.12", "0.1", "0.08", "0.06", "0.04", "0.02", "0", "-0.02", "-0.04", "-0.06", "-0.08", "-0.1", "-0.12"];
const xLabels = ["-0.1", "-0.05", "0", "0.05", "0.1", "0.15", "0.2", "0.25", "0.3"];

function Arrow({ from, to, c }: { from: P; to: P; c: string }) {
  const d = Math.hypot(to[0] - from[0], to[1] - from[1]);
  const ux = (to[0] - from[0]) / d, uy = (to[1] - from[1]) / d;
  const b: P = [to[0] - ux * 9, to[1] - uy * 9];
  return (
    <g stroke={c} fill={c}>
      <path d={seg(from, b)} strokeWidth="1.8" />
      <path stroke="none" d={`M${to[0]} ${to[1]}L${b[0] - uy * 3.3} ${b[1] + ux * 3.3}L${b[0] + uy * 3.3} ${b[1] - ux * 3.3}Z`} />
    </g>
  );
}

function Scene() {
  return (
    <svg viewBox="966 73 834 615" preserveAspectRatio="xMinYMin meet" className="block h-full w-full font-['DejaVu_Sans',sans-serif]" role="img" aria-label="几何图形">
      <defs>
        <clipPath id="cl"><polygon points={LEFT} /></clipPath>
        <clipPath id="ct"><polygon points={TOP} /></clipPath>
        <clipPath id="cs2">{slots.map((s, i) => <path key={i} d={slotPaths(s).outline} />)}</clipPath>
        <linearGradient id="cap" x1="0" y1="0" x2="1" y2=".4">
          <stop offset="0" stopColor="#8d8d8d" /><stop offset=".5" stopColor="#bdbdbd" /><stop offset="1" stopColor="#d2d2d2" />
        </linearGradient>
        <linearGradient id="capEnd" x1="0" y1="0" x2="1" y2=".3">
          <stop offset="0" stopColor="#d6d6d6" /><stop offset="1" stopColor="#8f8f8f" />
        </linearGradient>
      </defs>
      <polygon points={[QA, QB, QC, QD].join(" ")} fill="#8e8e8e" fillOpacity=".34" />
      <path d={gridPath} stroke="#777" strokeOpacity=".24" strokeWidth="1" />
      <path d={ticks} stroke="#333" strokeWidth=".7" />
      <path d={seg(QA, QB) + seg(QD, QC)} stroke="#222" strokeWidth="1.1" />
      <path d={seg(QA, QD) + seg(QB, QC)} stroke="#555" strokeWidth="1" strokeDasharray="1.5 .8" />

      <path
        d="M1094.3 244.7 1459.3 161M1090 250.7 1454.7 166.7M1085 256.7 1450 172.3M1080 263.3 1120 254M1151 226.700l-16 21.300M1247.700 205l-16 20.500M1338.700 184l-15.500 19M1423.300 165l-15 19M1148.300 367.700l17.700-4.400M1262.700 499.300l19-5.300M1415 600l4.300 6M1504.300 562.700l5 7.300M1588.300 531l5 5.700M1666.700 499.300l4.300 6.400M1538.300 235.700l5.700-3.400M1644 350.700l5.300-4"
        stroke="#8b8b8b" strokeWidth="1.1" fill="none"
      />

      <polygon points={TOP} fill="#9b9b9b" />
      <polygon points={LEFT} fill="#cbcbcb" />
      <polygon points={FRONT} fill="#838383" />
      <g clipPath="url(#ct)"><path d={gridY} stroke="#777" strokeOpacity=".08" /></g>
      {slots.map((s, i) => {
        const p = slotPaths(s);
        return (
          <g key={i}>
            <path d={p.outline} fill="#cacaca" />
            <path d={p.top} fill="url(#cap)" />
            <path d={p.hi} fill="#dedede" />
            <path d={p.wall} fill="#d2d2d2" />
            <path d={p.end} fill="url(#capEnd)" />
          </g>
        );
      })}
      <g clipPath="url(#cl)"><path d={gridPath} stroke="#888" strokeOpacity=".3" /></g>
      <g clipPath="url(#cs2)"><path d={gridY} stroke="#888" strokeOpacity=".2" /></g>
      {slots.map((s, i) => {
        const p = slotPaths(s);
        return (
          <g key={i} fill="none" stroke="#1e1e1e">
            <path d={p.lines} stroke="#444" strokeWidth="1.1" />
            <path d={p.outline} strokeWidth="1.3" />
          </g>
        );
      })}
      <polygon points={LEFT} fill="none" stroke="#3c3c3c" strokeWidth="1.1" />
      <polygon points={FRONT} fill="none" stroke="#555" strokeWidth="1" />
      <polygon points={TOP} fill="none" stroke="#111" strokeWidth="1.4" />

      <g fontSize="12" fill="#3d4146" textAnchor="middle" dominantBaseline="central">
        <text x="1151" y="211">0</text>
        <text x="1247" y="189">0.1</text>
        <text x="1337" y="168">0.2</text>
        <text x="1422" y="149">0.3</text>
        <text x="1073" y="244">10</text>
        <text x="1291" y="146">m</text>
        <text x="1010" y="209" fontSize="8" transform="rotate(-24 1010 209)">m</text>
      </g>
      <text x="1007" y="238" fontSize="12" fill="#2d3033">×10<tspan dy="-5" fontSize="9">-3</tspan><tspan dy="5"> m</tspan></text>

      <g fontSize="11" fill="#4b5157" textAnchor="middle" className="font-['Noto_Sans',sans-serif]">
        {yLabels.map((t, i) => {
          const [x, y] = project(X0, 0.2 - i * 0.02);
          return <text key={t} x={x - 7} y={y + 14} transform={`rotate(-28 ${x - 7} ${y + 10})`}>{t}</text>;
        })}
        {xLabels.map((t, i) => {
          const [x, y] = project(-0.1 + i * 0.05, Y1);
          return <text key={t} x={x + 14} y={y + 11} transform={`rotate(-36 ${x + 14} ${y + 7})`}>{t}</text>;
        })}
      </g>

      <g fontSize="12" fill="#000" dominantBaseline="central">
        <text x="1120" y="378">0.1</text>
        <text x="1247" y="511">0</text>
        <text x="1181" y="485">m</text>
        <text x="1307" y="411">yw</text>
        <text x="1361" y="414">zw</text>
        <text x="1359" y="437">xw</text>
        <text x="983" y="615">y</text>
        <text x="1029" y="617">z</text>
        <text x="1026" y="637">x</text>
      </g>
      <Arrow from={[1344.7, 445]} to={[1325, 424]} c={G} />
      <Arrow from={[1344.7, 445]} to={[1360.5, 426]} c={B} />
      <Arrow from={[1344.7, 445]} to={[1360.5, 441]} c="#d8255f" />
      <Arrow from={[1010, 644]} to={[990.5, 622.5]} c={G} />
      <Arrow from={[1010, 644]} to={[1027, 624]} c={B} />
      <Arrow from={[1010, 644]} to={[1025.5, 640]} c="#d8255f" />
    </svg>
  );
}

/* ---------- messages ---------- */

const Close = () => (
  <button aria-label="关闭" className="flex">
    <svg viewBox="0 0 9 9" className="h-[9px] w-[9px]"><path d="m.5.5 8 8M8.500.5l-8 8" stroke="#c6cad6" strokeWidth="1.2" /></svg>
  </button>
);

function Messages() {
  return (
    <section className="mt-[5px] shrink-0 border-t border-l border-[#cfd0d4] pt-[5px]">
      <div role="tablist" className="flex h-[26px] items-stretch pl-1 text-[13px]">
        <div className="flex items-center gap-2 border border-b-0 border-[#cfd0d4] pr-[7px] pl-1 text-[#2b5797]">
          <button role="tab" aria-selected="true">消息</button><Close />
        </div>
        <div className="flex flex-1 gap-2 border-b border-[#cfd0d4] pl-2">
          <button role="tab" aria-selected="false" className="bg-[#ededed] px-1">进度</button>
          <button role="tab" aria-selected="false" className="bg-[#ededed] px-1">日志</button>
          <div className="flex items-center gap-2 bg-[#ededed] pr-[7px] pl-1">
            <button role="tab" aria-selected="false">表格</button><Close />
          </div>
        </div>
      </div>
      <div className="flex h-[30px] items-center pt-1 pl-1.5">
        <button aria-label="清除" className="flex">
          <Ic><path d="m3.5 0 3 7" stroke="#6b5543" strokeWidth="1.5" /><path d="m4.500 7 3-1 4.500 8.500-5.500 1z" fill="#efd3b4" stroke="#8c6b4d" strokeWidth=".8" /><path d="m5.200 8 3-1" stroke="#c8442c" strokeWidth="1.3" /></Ic>
        </button>
      </div>
      <div className="ml-1 h-9 border-t border-l border-[#cfd0d4] pl-0.5 text-xs leading-[17px] whitespace-nowrap">
        <p>COMSOL Multiphysics 5.4.0.225</p>
        <p>[2020-10-14 下午9:11] 打开的文件：E:\研一\model\20.偏振转换Metasurface\分割.mph</p>
      </div>
    </section>
  );
}

function InputBar() {
  return (
    <div className="fixed top-[402px] right-0 flex h-7 items-center">
      <svg viewBox="0 0 28 28" className="relative z-10 -mr-3 h-7 w-7" aria-hidden="true">
        <path d="M3 4.500 21 1q2.500-.3 3 2l3.300 18q.3 2.500-2 3L8 27.500q-2.500.3-3-2L1 7.500q-.3-2.500 2-3z" fill="#f4511e" />
        <path d="M21.500 8.200C17 5.800 8.500 7 8.300 11c-.2 4 11.500 2.800 11.500 6 0 3-7 4-12.300 1.500" stroke="#fff" strokeWidth="3.6" fill="none" strokeLinecap="round" />
      </svg>
      <div className="flex h-6 w-[89px] items-center gap-2 overflow-hidden border-y border-[#9fb4c2] bg-white pl-[17px] text-[#1b74c9]">
        <span className="w-[15px] shrink-0 text-[15px] leading-5 font-bold">英</span>
        <svg viewBox="0 0 12 12" className="h-3 w-3 shrink-0"><circle cx="3" cy="3" r="2" fill="currentColor" /><path d="M8 5.500h2.500v2.200Q10 10 8 10.500V9.500q.8-.6.800-1.500H8z" fill="currentColor" /></svg>
        <svg viewBox="0 0 18 18" className="h-[17px] w-[17px] shrink-0" fill="none" stroke="currentColor" strokeWidth="1.6">
          <circle cx="9" cy="9" r="7.5" /><path d="M5 10q4 5 8 0" /><path d="M6.500 5.500v2M11.500 5.500v2" />
        </svg>
        <svg viewBox="0 0 12 16" className="h-4 w-3 shrink-0" fill="none" stroke="currentColor" strokeWidth="1.8">
          <path d="M4 2h4v7H4zM1 7q0 5 5 5t5-5M6 12v3" />
        </svg>
      </div>
    </div>
  );
}

export default function App() {
  return (
    <main className={`flex h-screen gap-[5px] overflow-hidden bg-[#fafbff] pl-[3px] text-xs text-black ${SANS}`}>
      <section className="flex w-[419px] shrink-0 flex-col border border-b-0 border-[#99cdf9] px-1">
        <div className="-mr-1 -ml-1"><Title text="模型开发器" color="text-[#1e90f0]" ctl="#4a4a4a" /></div>
        <ModelBar />
        <ul role="tree" className="mt-[3px] flex-1 border border-b-0 border-[#cfd0d4] bg-white leading-5">
          {tree.map((n, i) => <TreeRow key={i} n={n} />)}
        </ul>
      </section>

      <Settings />

      <div className="flex min-w-0 flex-1 flex-col">
        <section className="flex min-h-0 flex-1 flex-col border border-r-0 border-[#cfd0d4] bg-linear-to-b from-[#fafbff] from-15% to-[#daecff]">
          <Title text="图形" color="text-[#2b5797]" />
          <GraphBar />
          <div className="min-h-0 flex-1"><Scene /></div>
        </section>
        <Messages />
      </div>

      <InputBar />
      <button aria-label="悬浮球" className="fixed -right-10 bottom-5 flex h-15 w-14 items-center rounded-full border border-[#3c414d] bg-[#565c6a] pl-3 text-xl text-white shadow">5</button>
    </main>
  );
}
